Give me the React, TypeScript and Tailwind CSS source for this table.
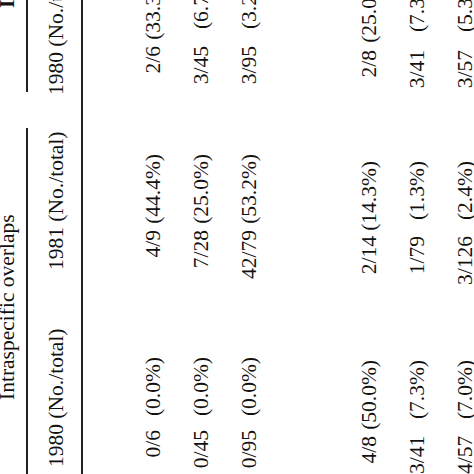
import React from "react";

type Cell = [string, string];
type Row = [Cell, Cell, Cell];

const group1: Row[] = [
  [["0/6", "(0.0%)"], ["4/9", "(44.4%)"], ["2/6", "(33.3%)"]],
  [["0/45", "(0.0%)"], ["7/28", "(25.0%)"], ["3/45", "(6.7%)"]],
  [["0/95", "(0.0%)"], ["42/79", "(53.2%)"], ["3/95", "(3.2%)"]],
];

const group2: Row[] = [
  [["4/8", "(50.0%)"], ["2/14", "(14.3%)"], ["2/8", "(25.0%)"]],
  [["3/41", "(7.3%)"], ["1/79", "(1.3%)"], ["3/41", "(7.3%)"]],
  [["4/57", "(7.0%)"], ["3/126", "(2.4%)"], ["3/57", "(5.3%)"]],
];

// fraction right edges / percentage right edges
// g1: A 44/117, B 244/320, C 428/504
const g1w = [
  "w-[44px]",
  "w-[73px]",
  "w-[127px]",
  "w-[76px]",
  "w-[108px]",
  "w-[76px]",
];
// g2: A 38/114, B 238/313, C 424/501
const g2w = [
  "w-[38px]",
  "w-[76px]",
  "w-[124px]",
  "w-[75px]",
  "w-[111px]",
  "w-[77px]",
];

function DataRow({ row, widths }: { row: Row; widths: string[] }) {
  const items = row.flatMap((c) => c);
  return (
    <div className="flex h-[48px] shrink-0 items-start">
      {items.map((t, i) => (
        <span
          key={i}
          className={`${widths[i]} shrink-0 whitespace-nowrap text-right`}
        >
          {t}
        </span>
      ))}
    </div>
  );
}

export default function App() {
  return (
    <div className="h-[474px] w-[474px] overflow-hidden bg-white">
      <div
        className="flex h-[474px] w-[474px] -rotate-90 flex-col overflow-hidden bg-white text-[21.5px] leading-[14px] text-[#111]"
        style={{ fontFamily: '"Liberation Serif", "Times New Roman", serif' }}
      >
        {/* group headers */}
        <div className="flex h-[26.25px] shrink-0 items-start">
          <span className="w-[466px] shrink-0 whitespace-nowrap pl-[74px]">
            Intraspecific overlaps
          </span>
          <span className="shrink-0 whitespace-nowrap font-bold">
            Interspecific overlaps
          </span>
        </div>
        {/* partial rules */}
        <div className="flex h-[1.5px] shrink-0">
          <div className="h-full w-[346px] shrink-0 bg-[#222]" />
          <div className="h-full w-[36px] shrink-0" />
          <div className="h-full w-[120px] shrink-0 bg-[#222]" />
        </div>
        {/* column headers */}
        <div className="flex h-[53.5px] shrink-0 items-start pt-[21px]">
          <span className="w-[204px] shrink-0 whitespace-nowrap pl-[7px]">
            1980 (No./total)
          </span>
          <span className="w-[175px] shrink-0 whitespace-nowrap">
            1981 (No./total)
          </span>
          <span className="shrink-0 whitespace-nowrap">1980 (No./total)</span>
        </div>
        {/* full rule */}
        <div className="h-[1.5px] w-[520px] shrink-0 bg-[#222]" />
        {/* data */}
        <div className="flex shrink-0 flex-col pt-[63px]">
          {group1.map((r, i) => (
            <DataRow key={`a${i}`} row={r} widths={g1w} />
          ))}
          <div className="h-[72px] shrink-0" />
          {group2.map((r, i) => (
            <DataRow key={`b${i}`} row={r} widths={g2w} />
          ))}
        </div>
      </div>
    </div>
  );
}
